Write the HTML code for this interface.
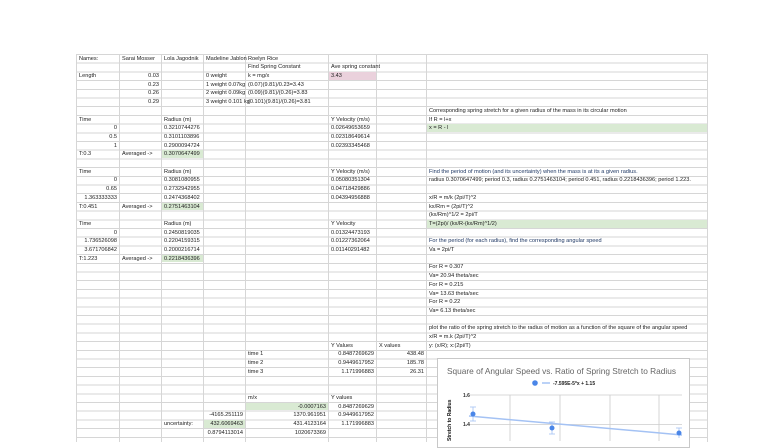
<!DOCTYPE html>
<html><head><meta charset="utf-8"><style>
body{margin:0;width:784px;height:441px;overflow:hidden;background:#fff;font-family:"Liberation Sans",sans-serif;position:relative}
#grid{position:absolute;left:76px;top:53.6px;width:631px;height:388px;
background:repeating-linear-gradient(to bottom,#d6d6d6 0,#d6d6d6 1px,transparent 1px,transparent 8.7px)}
.v{position:absolute;top:53.6px;height:388px;width:1px;background:#d6d6d6}
.c{position:absolute;height:8.7px;line-height:9px;font-size:5.6px;color:#222;white-space:nowrap;padding:0 2px;box-sizing:border-box;overflow:visible}
.r{text-align:right}
.g{background:#d9ead3}
.p{background:#ead1dc}
.b{color:#1f3864}
</style></head><body>
<div id="grid"></div>
<div class="v" style="left:76px"></div><div class="v" style="left:119px"></div><div class="v" style="left:161px"></div><div class="v" style="left:203px"></div><div class="v" style="left:245px"></div><div class="v" style="left:328px"></div><div class="v" style="left:376px"></div><div class="v" style="left:426px"></div><div class="v" style="left:707px"></div>
<script>
const X=[76,119,161,203,245,328,376,426,707];
const d=[
[0,0,"Names:"],[0,1,"Sarai Mosser"],[0,2,"Lola Jagodnik"],[0,3,"Madeline Jablon"],[0,4,"Roelyn Rice"],
[1,4,"Find Spring Constant"],[1,5,"Ave spring constant"],
[2,0,"Length"],[2,1,"0.03","r"],[2,3,"0 weight"],[2,4,"k = mg/x"],[2,5,"3.43","p"],
[3,1,"0.23","r"],[3,3,"1 weight 0.07kg"],[3,4,"(0.07)(9.81)/0.23=3.43"],
[4,1,"0.26","r"],[4,3,"2 weight 0.09kg"],[4,4,"(0.09)(9.81)/(0.26)=3.83"],
[5,1,"0.29","r"],[5,3,"3 weight 0.101 kg"],[5,4,"(0.101)(9.81)/(0.26)=3.81"],
[6,7,"Corresponding spring stretch for a given radius of the mass in its circular motion"],
[7,0,"Time"],[7,2,"Radius (m)"],[7,5,"Y Velocity (m/s)"],[7,7,"If R = l+x"],
[8,0,"0","r"],[8,2,"0.3210744276"],[8,5,"0.02649653659"],[8,7,"x = R - l","g"],
[9,0,"0.5","r"],[9,2,"0.3101103896"],[9,5,"0.02318649614"],
[10,0,"1","r"],[10,2,"0.2900094724"],[10,5,"0.02393345468"],
[11,0,"T:0.3"],[11,1,"Averaged ->"],[11,2,"0.3070647499","g"],
[13,0,"Time"],[13,2,"Radius (m)"],[13,5,"Y Velocity (m/s)"],[13,7,"Find the period of motion (and its uncertainty) when the mass is at its a given radius.","b"],
[14,0,"0","r"],[14,2,"0.3081080955"],[14,5,"0.05080351304"],[14,7,"radius 0.3070647499; period 0.3, radius 0.2751463104; period 0.451, radius 0.2218436396; period 1.223."],
[15,0,"0.65","r"],[15,2,"0.2732942955"],[15,5,"0.04718429886"],
[16,0,"1.363333333","r"],[16,2,"0.2474368402"],[16,5,"0.04394956888"],[16,7,"x/R = m/k (2pi/T)^2"],
[17,0,"T:0.451"],[17,1,"Averaged ->"],[17,2,"0.2751463104","g"],[17,7,"kx/Rm = (2pi/T)^2"],
[18,7,"(kx/Rm)^1/2 = 2pi/T"],
[19,0,"Time"],[19,2,"Radius (m)"],[19,5,"Y Velocity"],[19,7,"T=(2pi)/ (kx/R-(kx/Rm)^1/2)","g"],
[20,0,"0","r"],[20,2,"0.2450819035"],[20,5,"0.01324473193"],
[21,0,"1.736526098","r"],[21,2,"0.2204159315"],[21,5,"0.01227362064"],[21,7,"For the period (for each radius), find the corresponding angular speed","b"],
[22,0,"3.671706842","r"],[22,2,"0.2000216714"],[22,5,"0.01140291482"],[22,7,"Va = 2pi/T"],
[23,0,"T:1.223"],[23,1,"Averaged ->"],[23,2,"0.2218436396","g"],
[24,7,"For R = 0.307"],[25,7,"Va= 20.94 theta/sec"],[26,7,"For R = 0.215"],[27,7,"Va= 13.63 theta/sec"],[28,7,"For R = 0.22"],[29,7,"Va= 6.13 theta/sec"],
[31,7,"plot the ratio of the spring stretch to the radius of motion as a function of the square of the angular speed"],
[32,7,"x/R = m.k (2pi/T)^2"],
[33,5,"Y Values"],[33,6,"X values"],[33,7,"y: (x/R); x:(2pi/T)"],
[34,4,"time 1"],[34,5,"0.8487269629","r"],[34,6,"438.48","r"],
[35,4,"time 2"],[35,5,"0.9449617952","r"],[35,6,"185.78","r"],
[36,4,"time 3"],[36,5,"1.171996883","r"],[36,6,"26.31","r"],
[39,4,"m/x"],[39,5,"Y values"],
[40,4,"-0.0007163","r g"],[40,5,"0.8487269629","r"],
[41,3,"-4165.251119","r"],[41,4,"1370.961951","r"],[41,5,"0.9449617952","r"],
[42,2,"uncertainty:"],[42,3,"432.6069463","r g"],[42,4,"431.4123164","r"],[42,5,"1.171996883","r"],
[43,3,"0.8794113014","r"],[43,4,"1020673369","r"]
];
let h="";
for(const [r,c,t,cl] of d){
 const w=X[c+1]-X[c]-1;
 h+=`<div class="c ${cl||""}" style="left:${X[c]+1}px;top:${54.6+r*8.7}px;width:${w}px;height:7.7px;line-height:8px">${t}</div>`;
}
document.write(h);
</script>
<div style="position:absolute;left:437px;top:358px;width:253px;height:90px;background:#fff;border:1px solid #c8c8c8;box-sizing:border-box"></div>
<svg style="position:absolute;left:0;top:0" width="784" height="441">
<text x="447" y="374" font-family="Liberation Sans" font-size="8.5" fill="#666" textLength="229" lengthAdjust="spacingAndGlyphs">Square of Angular Speed vs. Ratio of Spring Stretch to Radius</text>
<circle cx="535" cy="383" r="2.8" fill="#4a86e8"/>
<line x1="542" y1="383" x2="550" y2="383" stroke="#a4c2f4" stroke-width="1.5"/>
<text x="553" y="385" font-family="Liberation Sans" font-size="5" font-weight="bold" fill="#222">-7.595E-5*x + 1.15</text>
<g stroke="#ccc" stroke-width="0.8">
<line x1="465" y1="395" x2="682" y2="395"/><line x1="465" y1="424.5" x2="682" y2="424.5"/>
<line x1="510" y1="395" x2="510" y2="441"/><line x1="560" y1="395" x2="560" y2="441"/><line x1="610" y1="395" x2="610" y2="441"/><line x1="659" y1="395" x2="659" y2="441"/>
</g>
<text x="463" y="397" font-family="Liberation Sans" font-size="5" font-weight="bold" fill="#333">1.6</text>
<text x="463" y="426" font-family="Liberation Sans" font-size="5" font-weight="bold" fill="#333">1.4</text>
<text transform="translate(451,441) rotate(-90)" font-family="Liberation Sans" font-size="5" font-weight="bold" fill="#111">Stretch to Radius</text>
<line x1="469" y1="416" x2="682" y2="435" stroke="#a4c2f4" stroke-width="1.5"/>
<g stroke="#a4c2f4" stroke-width="0.8">
<line x1="473" y1="407" x2="473" y2="421"/><line x1="470" y1="407" x2="476" y2="407"/><line x1="470" y1="421" x2="476" y2="421"/>
<line x1="552" y1="422" x2="552" y2="434"/><line x1="549" y1="434" x2="555" y2="434"/><line x1="549" y1="422" x2="555" y2="422"/>
<line x1="679" y1="428" x2="679" y2="438"/><line x1="676" y1="428" x2="682" y2="428"/>
</g>
<circle cx="473" cy="414" r="2.5" fill="#4a86e8"/>
<circle cx="552" cy="428" r="2.5" fill="#4a86e8"/>
<circle cx="679" cy="433" r="2.5" fill="#4a86e8"/>
</svg>
</body></html>
